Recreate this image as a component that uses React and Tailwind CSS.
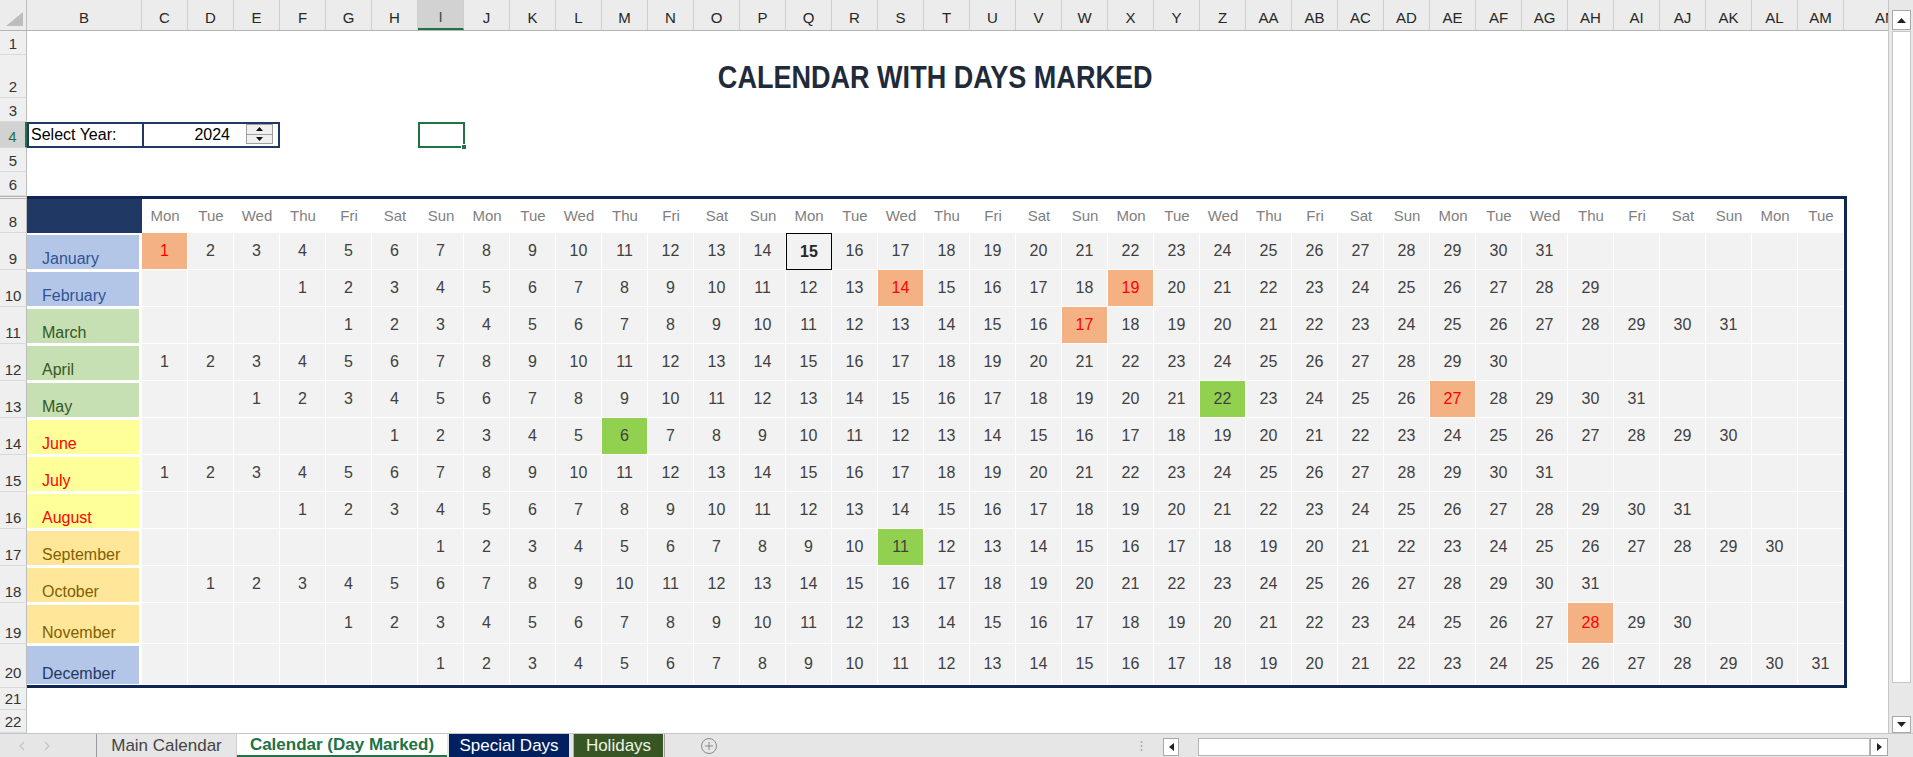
import React from 'react'

const YEAR = 2024
const DAY_NAMES = ['Mon', 'Tue', 'Wed', 'Thu', 'Fri', 'Sat', 'Sun']

const colName = (i) => {
  let s = ''
  let n = i + 1
  while (n > 0) {
    const r = (n - 1) % 26
    s = String.fromCharCode(65 + r) + s
    n = Math.floor((n - 1) / 26)
  }
  return s
}

// C .. AM
const GRID_COLS = Array.from({ length: 37 }, (_, i) => colName(i + 2))

const MONTHS = [
  { name: 'January', tone: 'bg-[#b4c6e7] text-[#2f5496]' },
  { name: 'February', tone: 'bg-[#b4c6e7] text-[#2f5496]' },
  { name: 'March', tone: 'bg-[#c6e0b4] text-[#375623]' },
  { name: 'April', tone: 'bg-[#c6e0b4] text-[#375623]' },
  { name: 'May', tone: 'bg-[#c6e0b4] text-[#375623]' },
  { name: 'June', tone: 'bg-[#ffff99] text-[#ff0000]' },
  { name: 'July', tone: 'bg-[#ffff99] text-[#ff0000]' },
  { name: 'August', tone: 'bg-[#ffff99] text-[#ff0000]' },
  { name: 'September', tone: 'bg-[#ffe699] text-[#7f6000]' },
  { name: 'October', tone: 'bg-[#ffe699] text-[#7f6000]' },
  { name: 'November', tone: 'bg-[#ffe699] text-[#7f6000]' },
  { name: 'December', tone: 'bg-[#b4c6e7] text-[#1f3864]' },
].map((m, i) => ({
  ...m,
  start: (new Date(YEAR, i, 1).getDay() + 6) % 7,
  days: new Date(YEAR, i + 1, 0).getDate(),
}))

const MARKS = {
  '0-1': 'orange',
  '0-15': 'today',
  '1-14': 'orange',
  '1-19': 'orange',
  '2-17': 'orange',
  '4-22': 'green',
  '4-27': 'orange',
  '5-6': 'green',
  '8-11': 'green',
  '10-28': 'orange',
}

function RowNum({ n, className = 'pb-[2px]', active = false }) {
  return (
    <div
      className={`w-[27px] shrink-0 flex items-end justify-center text-[15px] leading-[17px] border-b border-b-[#dadada] ${
        active
          ? 'bg-[#d2d2d2] text-[#217346] border-r-2 border-r-[#217346]'
          : 'bg-[#efefef] text-[#333333] border-r border-r-[#bcbcbc]'
      } ${className}`}
    >
      {n}
    </div>
  )
}

function EmptyRow({ n, h }) {
  return (
    <div className={`flex ${h}`}>
      <RowNum n={n} />
      <div className="flex-1" />
    </div>
  )
}

function ColumnHeaders() {
  return (
    <div className="flex h-[31px] bg-[#ececec] border-b border-[#b5b5b5] text-[15px] text-[#262626]">
      <div className="w-[27px] shrink-0 border-r border-[#bcbcbc] flex items-end justify-end pr-[3px] pb-[4px]">
        <svg width="17" height="14" viewBox="0 0 17 14">
          <polygon points="17,0 17,14 0,14" fill="#bdbdbd" />
        </svg>
      </div>
      <div className="w-[115px] shrink-0 border-r border-[#cfcfcf] flex items-center justify-center pt-[6px]">B</div>
      {GRID_COLS.map((c) => (
        <div
          key={c}
          className={`w-[46px] shrink-0 flex items-center justify-center pt-[6px] ${
            c === 'I'
              ? 'bg-[#d2d2d2] border-b-2 border-b-[#217346] border-r border-r-[#cfcfcf] text-[#1f5c3a]'
              : 'border-r border-[#cfcfcf]'
          }`}
        >
          {c}
        </div>
      ))}
      <div className="w-[44px] shrink-0 overflow-hidden whitespace-nowrap pl-[31px] flex items-center pt-[6px]">AN</div>
    </div>
  )
}

function Spinner() {
  return (
    <div className="ml-[16px] mr-[5px] self-start w-[27px] h-[20px] flex flex-col border border-[#a0a0a0] bg-[#f0f0f0]">
      <div className="flex-1 flex items-center justify-center border-b border-[#a0a0a0]">
        <svg width="7" height="4" viewBox="0 0 7 4">
          <polygon points="3.5,0 7,4 0,4" fill="#111" />
        </svg>
      </div>
      <div className="flex-1 flex items-center justify-center">
        <svg width="7" height="4" viewBox="0 0 7 4">
          <polygon points="0,0 7,0 3.5,4" fill="#111" />
        </svg>
      </div>
    </div>
  )
}

function SelectYearRow() {
  return (
    <div className="flex h-[26px]">
      <RowNum n={4} active />
      <div className="w-[253px] shrink-0 border-2 border-[#1f3864] flex text-[16px] text-black">
        <div className="w-[115px] shrink-0 border-r-2 border-[#1f3864] flex items-center pl-[2px]">Select Year:</div>
        <div className="flex-1 flex items-center justify-end">
          <span>{YEAR}</span>
          <Spinner />
        </div>
      </div>
      <div className="w-[138px] shrink-0" />
      {/* active cell I4 */}
      <div className="w-[47px] shrink-0 relative border-2 border-[#217346]">
        <div className="absolute -right-[4px] -bottom-[4px] w-[6px] h-[6px] bg-[#217346] border border-white" />
      </div>
    </div>
  )
}

function DayCell({ day, mark }) {
  let tone = 'bg-[#f2f2f2] text-[#404040] border-r border-b border-white'
  if (mark === 'orange') tone = 'bg-[#f4b183] text-[#ff0000] border-r border-b border-white'
  if (mark === 'green') tone = 'bg-[#92d050] text-[#404040] border-r border-b border-white'
  if (mark === 'today') tone = 'bg-[#f2f2f2] text-[#262626] font-bold border border-black'
  return <div className={`w-[46px] shrink-0 h-full flex items-center justify-center ${tone}`}>{day}</div>
}

function MonthRow({ month, index }) {
  const tall = index >= 10
  const cells = GRID_COLS.map((_, col) => {
    const d = col - month.start + 1
    return d >= 1 && d <= month.days ? d : null
  })
  return (
    <div className={`flex bg-white ${tall ? 'h-[41px]' : 'h-[37px]'}`}>
      <div className="w-[115px] shrink-0 pt-[2px] pb-px pr-[3px]">
        <div className={`h-full flex items-end pl-[15px] pb-[1px] text-[16px] leading-[18px] ${month.tone}`}>
          {month.name}
        </div>
      </div>
      {cells.map((d, col) => (
        <DayCell key={col} day={d} mark={d ? MARKS[`${index}-${d}`] : undefined} />
      ))}
    </div>
  )
}

function CalendarTable() {
  return (
    <div className="flex">
      <div className="flex flex-col w-[27px] shrink-0">
        {/* hidden row 7 */}
        <div className="h-[3px] bg-[#efefef] border-t border-b border-[#b5b5b5] border-r border-r-[#bcbcbc]" />
        <RowNum n={8} className="h-[34px] pb-[2px]" />
        {MONTHS.map((m, i) => (
          <RowNum
            key={m.name}
            n={i + 9}
            className={i === 11 ? 'h-[44px] pb-[6px]' : i === 10 ? 'h-[41px] pb-[2px]' : 'h-[37px] pb-[2px]'}
          />
        ))}
      </div>
      <div className="w-[1820px] shrink-0 border-t-[3px] border-r-[3px] border-b-[3px] border-[#0f2554] flex flex-col">
        <div className="flex h-[34px] bg-white">
          <div className="w-[115px] shrink-0 bg-[#203864]" />
          {GRID_COLS.map((c, i) => (
            <div key={c} className="w-[46px] shrink-0 flex items-center justify-center text-[15px] text-[#7f7f7f]">
              {DAY_NAMES[i % 7]}
            </div>
          ))}
        </div>
        {MONTHS.map((m, i) => (
          <MonthRow key={m.name} month={m} index={i} />
        ))}
      </div>
      <div className="flex-1" />
    </div>
  )
}

function VScroll() {
  return (
    <div className="w-[25px] shrink-0 flex flex-col bg-[#e8e8e8] border-l border-[#c6c6c6] pl-[3px] pr-[2px]">
      <div className="h-[10px]" />
      <div className="h-[20px] bg-white border border-[#a8a8a8] flex items-center justify-center">
        <svg width="9" height="5" viewBox="0 0 9 5">
          <polygon points="4.5,0 9,5 0,5" fill="#222" />
        </svg>
      </div>
      <div className="h-[652px] mt-px bg-white border border-[#c6c6c6]" />
      <div className="flex-1" />
      <div className="h-[17px] bg-white border border-[#a8a8a8] flex items-center justify-center">
        <svg width="9" height="5" viewBox="0 0 9 5">
          <polygon points="0,0 9,0 4.5,5" fill="#222" />
        </svg>
      </div>
    </div>
  )
}

function TabBar() {
  return (
    <div className="h-[24px] shrink-0 flex bg-[#e6e6e6] border-t border-[#c6c6c6] text-[17px] leading-[22px]">
      <div className="w-[97px] shrink-0 flex items-center gap-[19px] pl-[19px] border-r border-[#9a9a9a]">
        <svg width="6" height="10" viewBox="0 0 6 10">
          <polyline points="5,1 1,5 5,9" fill="none" stroke="#c4c4c4" strokeWidth="1.3" />
        </svg>
        <svg width="6" height="10" viewBox="0 0 6 10">
          <polyline points="1,1 5,5 1,9" fill="none" stroke="#c4c4c4" strokeWidth="1.3" />
        </svg>
      </div>
      <div className="w-[140px] shrink-0 flex items-center justify-center text-[#444444] border-r border-[#cfcfcf]">
        Main Calendar
      </div>
      <div className="w-[210px] shrink-0 flex items-center justify-center bg-white font-bold text-[#217346] border-b-2 border-[#217346]">
        Calendar (Day Marked)
      </div>
      <div className="w-[2px] shrink-0" />
      <div className="w-[120px] shrink-0 flex items-center justify-center bg-[#002060] text-white">Special Days</div>
      <div className="w-[5px] shrink-0 border-r border-[#b0b0b0]" />
      <div className="w-[89px] shrink-0 flex items-center justify-center bg-[#375623] text-[#eef3e8]">Holidays</div>
      <div className="w-[2px] shrink-0 border-r border-[#a0a0a0]" />
      <div className="w-[35px] shrink-0" />
      <div className="w-[18px] shrink-0 flex items-center justify-center">
        <svg width="18" height="18" viewBox="0 0 18 18">
          <circle cx="9" cy="9" r="7.5" fill="none" stroke="#8a8a8a" strokeWidth="1" />
          <path d="M9 5v8M5 9h8" stroke="#8a8a8a" strokeWidth="1" />
        </svg>
      </div>
      <div className="w-[420px] shrink-0" />
      <div className="w-[6px] shrink-0 flex items-center justify-center">
        <svg width="3" height="12" viewBox="0 0 3 12">
          <circle cx="1.5" cy="2" r="1" fill="#a8a8a8" />
          <circle cx="1.5" cy="6" r="1" fill="#a8a8a8" />
          <circle cx="1.5" cy="10" r="1" fill="#a8a8a8" />
        </svg>
      </div>
      <div className="w-[19px] shrink-0" />
      <div className="w-[16px] h-[18px] mt-[4px] shrink-0 bg-white border border-[#a8a8a8] flex items-center justify-center">
        <svg width="5" height="8" viewBox="0 0 5 8">
          <polygon points="5,0 5,8 0,4" fill="#222" />
        </svg>
      </div>
      <div className="w-[19px] shrink-0" />
      <div className="w-[672px] h-[18px] mt-[4px] shrink-0 bg-white border border-[#b5b5b5]" />
      <div className="w-[18px] h-[18px] mt-[4px] shrink-0 bg-white border border-[#a8a8a8] flex items-center justify-center">
        <svg width="5" height="8" viewBox="0 0 5 8">
          <polygon points="0,0 5,4 0,8" fill="#222" />
        </svg>
      </div>
      <div className="flex-1" />
    </div>
  )
}

export default function App() {
  return (
    <div className="w-[1913px] h-[757px] overflow-hidden bg-white flex flex-col font-['Liberation_Sans',Arial,sans-serif] select-none">
      <div className="flex flex-1 min-h-0">
        <div className="w-[1888px] shrink-0 flex flex-col">
          <ColumnHeaders />
          <EmptyRow n={1} h="h-[24px]" />
          <div className="flex h-[43px]">
            <RowNum n={2} />
            <div className="w-[1817px] shrink-0 flex items-center justify-center">
              {/* condensed heading: no narrow face installed, so squeeze Liberation Sans */}
              <span className="inline-block scale-x-[0.845] font-bold text-[32px] leading-none text-[#1f2a3a] whitespace-nowrap">
                CALENDAR WITH DAYS MARKED
              </span>
            </div>
          </div>
          <EmptyRow n={3} h="h-[24px]" />
          <SelectYearRow />
          <EmptyRow n={5} h="h-[24px]" />
          <EmptyRow n={6} h="h-[24px]" />
          <CalendarTable />
          <EmptyRow n={21} h="h-[22px]" />
          <EmptyRow n={22} h="h-[23px]" />
        </div>
        <VScroll />
      </div>
      <TabBar />
    </div>
  )
}
